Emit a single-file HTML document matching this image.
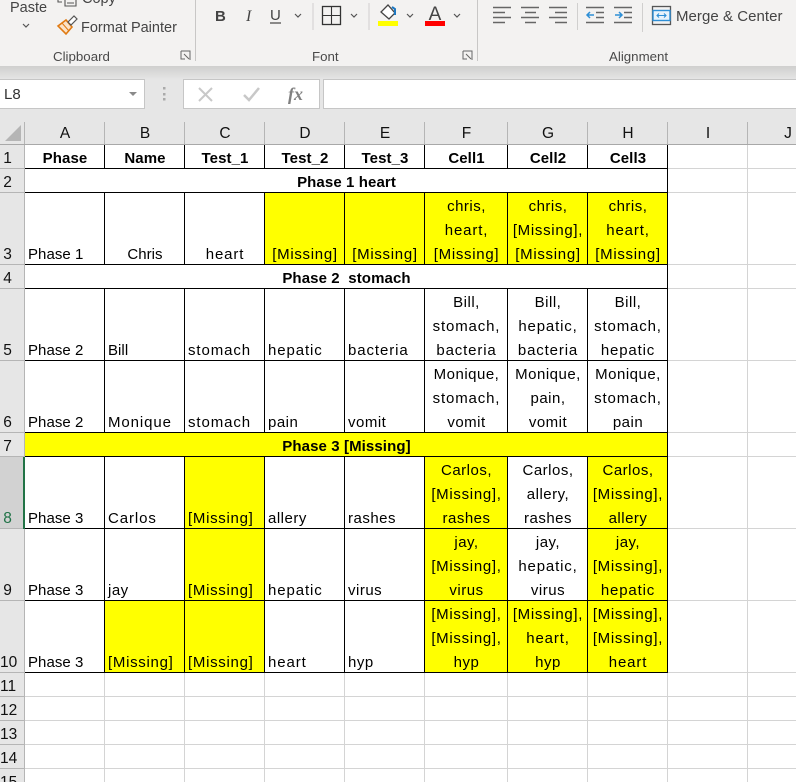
<!DOCTYPE html>
<html><head><meta charset="utf-8">
<style>
html,body{margin:0;padding:0;width:796px;height:782px;overflow:hidden}
body{background:#fff;font-family:"Liberation Sans",sans-serif;color:#000}
#p{position:absolute;left:0;top:0;width:796px;height:782px;overflow:hidden}
.a{position:absolute;white-space:nowrap}
.r{color:#444;font-size:14.5px;line-height:18px}
.l{color:#4a4a4a;font-size:13.300px;line-height:16px}
.vs{position:absolute;width:1px;background:#d0cfce}
#ribbon{position:absolute;left:0;top:0;width:796px;height:66px;background:#f3f2f1}
#shadow{position:absolute;left:0;top:66px;width:796px;height:14px;background:linear-gradient(#cfcfce,#e6e6e6)}
#fbar{position:absolute;left:0;top:70px;width:796px;height:52px;background:#e6e6e6}
.box{position:absolute;background:#fff;border:1px solid #c6c6c6;box-sizing:border-box}
.ch{position:absolute;top:122px;height:22px;box-sizing:border-box;text-align:center;font-size:15.500px;line-height:24px;color:#111}
.sep{position:absolute;top:122px;height:22px;width:1px;background:#b5b5b5}
.rh{position:absolute;left:0;width:24px;background:#e6e6e6;box-sizing:border-box;padding-right:9px;text-align:center;font-size:15.500px;line-height:27px;color:#111;border-bottom:1px solid #b5b5b5;overflow:hidden}
table{position:absolute;left:25px;top:145px;border-collapse:separate;border-spacing:0;table-layout:fixed;width:643px;background:#fff}
td{border:0;padding:2px 0 0 3px;font-size:15px;line-height:24px;vertical-align:bottom;text-align:left;white-space:nowrap;box-sizing:border-box;box-shadow:inset -1px -1px 0 #000;letter-spacing:.5px;background:#fff}
td::after{content:"";display:block;margin-top:-2px}
td.c{text-align:center;padding:2px 0 0}
td.b{font-weight:bold;text-align:center;padding:2px 0 0;letter-spacing:.1px}
td.n{letter-spacing:.05px}
td.w{letter-spacing:.9px}
td.y{background:#ff0}
i{font-style:normal;letter-spacing:.7px}
em{font-style:normal;letter-spacing:.85px}
</style></head><body><div id="p">

<div id="ribbon"></div>
<div id="fbar"></div>
<div id="shadow"></div>

<!-- Clipboard -->
<div class="a r" style="left:10px;top:-1px">Paste</div>
<svg class="a" style="left:0;top:0" width="196" height="66" fill="none">
<path d="M23 24l3 3 3-3" stroke="#555" stroke-width="1.200"/>
<path d="M58 0v2h4M65 0v6h11V0M67 3h7" stroke="#555" stroke-width="1.100"/>
<path d="M58 26l8-6 6 7-6 7z" fill="#fbe3c8" stroke="#e07a12" stroke-width="1.600"/>
<path d="M62 23l7 8" stroke="#e07a12" stroke-width="1"/>
<path d="M68 22l6-6 3 3-6 6z" fill="#fff" stroke="#555" stroke-width="1.200"/>
<path d="M181 51h9v9M184 54l5 5M181 51v8h4" stroke="#666" stroke-width="1"/>
</svg>
<div class="a r" style="left:81px;top:19px">Format Painter</div>
<div class="a r" style="left:82px;top:-10px">Copy</div>
<div class="a l" style="left:53px;top:49px">Clipboard</div>
<div class="vs" style="left:195px;top:0;height:61px;background:#c8c7c6"></div>

<!-- Font -->
<svg class="a" style="left:196px;top:0" width="284" height="66" fill="none">
<text x="19" y="21" font-family="Liberation Sans" font-weight="bold" font-size="15" fill="#444">B</text>
<text x="50" y="21" font-family="Liberation Serif" font-style="italic" font-size="16" fill="#444">I</text>
<text x="74" y="20" font-family="Liberation Sans" font-size="15" fill="#444">U</text>
<path d="M74 23h11" stroke="#444" stroke-width="1.200"/>
<path d="M99 14l3 3 3-3M155 14l3 3 3-3M211 14l3 3 3-3M258 14l3 3 3-3" stroke="#555" stroke-width="1.200"/>
<path d="M117 3v27" stroke="#d0cfce"/>
<path d="M173 3v27" stroke="#d0cfce"/>
<rect x="126.500" y="6.500" width="18" height="18" stroke="#333" stroke-width="1.300"/>
<path d="M135.500 6v19M126 15.500h19" stroke="#333" stroke-width="1.100"/>
<path d="M185 12l7-7 7 8-6 6z" stroke="#444" stroke-width="1.300" fill="#fff"/>
<path d="M196 7l3 2v6" stroke="#1d78c1" stroke-width="2"/>
<rect x="182" y="21" width="20" height="5" fill="#ff0"/>
<text x="239" y="20" text-anchor="middle" font-family="Liberation Sans" font-size="19" fill="#444">A</text>
<rect x="229" y="21" width="20" height="5" fill="#f00"/>
<path d="M267 51h9v9M270 54l5 5M267 51v8h4" stroke="#666" stroke-width="1"/>
</svg>
<div class="a l" style="left:312px;top:49px">Font</div>
<div class="vs" style="left:477px;top:0;height:61px;background:#c8c7c6"></div>

<!-- Alignment -->
<svg class="a" style="left:485px;top:0" width="200" height="35" fill="none" stroke="#666" stroke-width="1.600">
<path d="M8 7.500h18M8 12.500h12M8 17.500h18M8 22.500h12"/>
<path d="M36 7.500h18M40 12.500h11M36 17.500h18M40 22.500h11"/>
<path d="M64 7.500h18M70 12.500h12M64 17.500h18M70 22.500h12"/>
<path d="M92.500 3v27M157.500 3v29" stroke="#d0cfce" stroke-width="1"/>
<path d="M101 7.500h18M111 12.500h8M111 17.500h8M101 22.500h18"/>
<path d="M129 7.500h18M139 12.500h8M139 17.500h8M129 22.500h18"/>
<path d="M109 15h-7M105 12l-3 3 3 3M130 15h7M134 12l3 3-3 3" stroke="#2e8fd6" stroke-width="1.500"/>
<rect x="167.500" y="6.500" width="18" height="18" stroke="#555" stroke-width="1.300"/>
<rect x="168" y="10.500" width="17" height="10" fill="#e8f3fb" stroke="#2e8fd6" stroke-width="1.400"/>
<path d="M172 15.500h9M174 13.500l-2 2 2 2M179 13.500l2 2-2 2" stroke="#2e8fd6" stroke-width="1.100"/>
</svg>
<div class="a r" style="left:676px;top:8px;font-size:15px;letter-spacing:.05px">Merge &amp; Center</div>
<div class="a l" style="left:609px;top:49px">Alignment</div>

<!-- Formula bar -->
<div class="box" style="left:-2px;top:79px;width:147px;height:30px"></div>
<div class="a" style="left:4px;top:87px;font-size:15px;line-height:16px;color:#333">L8</div>
<svg class="a" style="left:0;top:79px" width="330" height="30" fill="none">
<path d="M129 13h8l-4 4z" fill="#8a8a8a"/>
<rect x="163" y="8" width="2.500" height="2.500" fill="#aaa"/><rect x="163" y="14" width="2.500" height="2.500" fill="#aaa"/><rect x="163" y="19" width="2.500" height="2.500" fill="#aaa"/>
</svg>
<div class="box" style="left:183px;top:79px;width:137px;height:30px"></div>
<div class="box" style="left:323px;top:79px;width:480px;height:30px"></div>
<svg class="a" style="left:183px;top:79px" width="137" height="30" fill="none">
<path d="M16 9l13 13M29 9L16 22" stroke="#c8c8c8" stroke-width="2"/>
<path d="M61 16l5 5 10-12" stroke="#c8c8c8" stroke-width="2.500"/>
<text x="105" y="21" font-family="Liberation Serif" font-style="italic" font-weight="bold" font-size="18" fill="#808080">fx</text>
</svg>

<!-- Column headers -->
<div class="a" style="left:0;top:122px;width:796px;height:22px;background:#e6e6e6"></div>
<div class="a" style="left:0;top:144px;width:796px;height:1px;background:#a8a8a8"></div>
<svg class="a" style="left:5px;top:125px" width="18" height="18"><path d="M16 0v16H0z" fill="#b5b5b5"/></svg>
<div class="ch" style="left:25px;width:80px">A</div>
<div class="ch" style="left:105px;width:80px">B</div>
<div class="ch" style="left:185px;width:80px">C</div>
<div class="ch" style="left:265px;width:80px">D</div>
<div class="ch" style="left:345px;width:80px">E</div>
<div class="ch" style="left:425px;width:83px">F</div>
<div class="ch" style="left:508px;width:80px">G</div>
<div class="ch" style="left:588px;width:80px">H</div>
<div class="ch" style="left:668px;width:80px">I</div>
<div class="ch" style="left:748px;width:80px">J</div>
<div class="sep" style="left:24px"></div><div class="sep" style="left:104px"></div><div class="sep" style="left:184px"></div><div class="sep" style="left:264px"></div><div class="sep" style="left:344px"></div><div class="sep" style="left:424px"></div><div class="sep" style="left:507px"></div><div class="sep" style="left:587px"></div><div class="sep" style="left:667px"></div><div class="sep" style="left:747px"></div>

<!-- Row headers -->
<div class="rh" style="top:145px;height:24px">1</div>
<div class="rh" style="top:169px;height:24px">2</div>
<div class="rh" style="top:193px;height:72px;padding-top:48px">3</div>
<div class="rh" style="top:265px;height:24px">4</div>
<div class="rh" style="top:289px;height:72px;padding-top:48px">5</div>
<div class="rh" style="top:361px;height:72px;padding-top:48px">6</div>
<div class="rh" style="top:433px;height:24px">7</div>
<div class="rh" style="top:457px;height:72px;padding-top:48px;background:#d2d2d2;color:#1f7246">8</div>
<div class="rh" style="top:529px;height:72px;padding-top:48px">9</div>
<div class="rh" style="top:601px;height:72px;padding-top:48px">10</div>
<div class="rh" style="top:673px;height:24px">11</div>
<div class="rh" style="top:697px;height:24px">12</div>
<div class="rh" style="top:721px;height:24px">13</div>
<div class="rh" style="top:745px;height:24px">14</div>
<div class="rh" style="top:769px;height:24px">15</div>
<div class="a" style="left:24px;top:145px;width:1px;height:637px;background:#b5b5b5"></div>
<div class="a" style="left:23px;top:457px;width:2px;height:72px;background:#217346"></div>

<!-- Gridlines -->
<svg class="a" style="left:25px;top:145px" width="771" height="637" stroke="#d4d4d4" fill="none">
<path d="M643 23.500h128M643 47.500h128M643 119.500h128M643 143.500h128M643 215.500h128M643 287.500h128M643 311.500h128M643 383.500h128M643 455.500h128M643 527.500h128"/>
<path d="M0 551.500h771M0 575.500h771M0 599.500h771M0 623.500h771"/>
<path d="M79.500 527v110M159.500 527v110M239.500 527v110M319.500 527v110M399.500 527v110M482.500 527v110M562.500 527v110M642.500 0v637M722.500 0v637"/>
</svg>

<table>
<colgroup><col style="width:80px"><col style="width:80px"><col style="width:80px"><col style="width:80px"><col style="width:80px"><col style="width:83px"><col style="width:80px"><col style="width:80px"></colgroup>
<tr style="height:24px"><td class="b">Phase</td><td class="b">Name</td><td class="b">Test_1</td><td class="b">Test_2</td><td class="b">Test_3</td><td class="b">Cell1</td><td class="b">Cell2</td><td class="b">Cell3</td></tr>
<tr style="height:24px"><td class="b" colspan="8">Phase 1 heart</td></tr>
<tr style="height:72px"><td class="n">Phase 1</td><td class="c n">Chris</td><td class="c"><em>heart</em></td><td class="c y"><i>[Missing]</i></td><td class="c y"><i>[Missing]</i></td><td class="c y">chris,<br><em>heart,</em><br><i>[Missing]</i></td><td class="c y">chris,<br><i>[Missing],</i><br><i>[Missing]</i></td><td class="c y">chris,<br><em>heart,</em><br><i>[Missing]</i></td></tr>
<tr style="height:24px"><td class="b" colspan="8">Phase 2&nbsp; stomach</td></tr>
<tr style="height:72px"><td class="n">Phase 2</td><td class="n">Bill</td><td class="w">stomach</td><td class="w">hepatic</td><td class="w">bacteria</td><td class="c">Bill,<br><em>stomach,</em><br><em>bacteria</em></td><td class="c">Bill,<br><em>hepatic,</em><br><em>bacteria</em></td><td class="c">Bill,<br><em>stomach,</em><br><em>hepatic</em></td></tr>
<tr style="height:72px"><td class="n">Phase 2</td><td class="w">Monique</td><td class="w">stomach</td><td>pain</td><td>vomit</td><td class="c">Monique,<br><em>stomach,</em><br>vomit</td><td class="c">Monique,<br>pain,<br>vomit</td><td class="c">Monique,<br><em>stomach,</em><br>pain</td></tr>
<tr style="height:24px"><td class="b y" colspan="8">Phase 3 [Missing]</td></tr>
<tr style="height:72px"><td class="n">Phase 3</td><td class="w">Carlos</td><td class="y"><i>[Missing]</i></td><td>allery</td><td>rashes</td><td class="c y">Carlos,<br><i>[Missing],</i><br>rashes</td><td class="c">Carlos,<br>allery,<br>rashes</td><td class="c y">Carlos,<br><i>[Missing],</i><br>allery</td></tr>
<tr style="height:72px"><td class="n">Phase 3</td><td>jay</td><td class="y"><i>[Missing]</i></td><td class="w">hepatic</td><td>virus</td><td class="c y">jay,<br><i>[Missing],</i><br>virus</td><td class="c">jay,<br><em>hepatic,</em><br>virus</td><td class="c y">jay,<br><i>[Missing],</i><br><em>hepatic</em></td></tr>
<tr style="height:72px"><td class="n">Phase 3</td><td class="y"><i>[Missing]</i></td><td class="y"><i>[Missing]</i></td><td class="w">heart</td><td>hyp</td><td class="c y"><i>[Missing],</i><br><i>[Missing],</i><br>hyp</td><td class="c y"><i>[Missing],</i><br><em>heart,</em><br>hyp</td><td class="c y"><i>[Missing],</i><br><i>[Missing],</i><br><em>heart</em></td></tr>
</table>
</div></body></html>
